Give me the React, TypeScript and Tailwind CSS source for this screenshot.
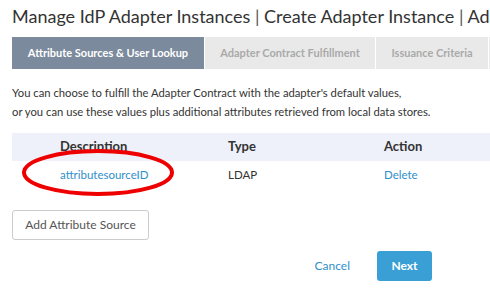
export default function App() {
  return (
    <div className="relative w-[490px] h-[298px] overflow-hidden bg-white font-['Lato','Open_Sans',sans-serif] text-[#333]">
      <h1 className="pl-3 pt-[4px] whitespace-nowrap text-[18px] leading-[24px] text-[#333]">
        Manage IdP Adapter Instances <span className="text-[#555]">|</span> Create Adapter Instance{' '}
        <span className="text-[#555]">|</span> Adapter Mappings
      </h1>

      <div className="flex ml-3 mt-[9px] h-8 whitespace-nowrap text-[11px] font-bold">
        <div className="w-[192px] shrink-0 flex items-center justify-center bg-[#7b8a9c] text-white">
          Attribute Sources &amp; User Lookup
        </div>
        <div className="w-[170px] shrink-0 ml-px flex items-center justify-center bg-[#e9e9e9] text-[#aaa]">
          Adapter Contract Fulfillment
        </div>
        <div className="w-[112px] shrink-0 ml-px flex items-center justify-center bg-[#e9e9e9] text-[#aaa]">
          Issuance Criteria
        </div>
        <div className="w-[60px] shrink-0 ml-px bg-[#e9e9e9]" />
      </div>

      <div className="pl-3 mt-[14px] text-[11.25px] leading-[19px] text-[#333]">
        <p>You can choose to fulfill the Adapter Contract with the adapter's default values,</p>
        <p>or you can use these values plus additional attributes retrieved from local data stores.</p>
      </div>

      <div className="ml-3 mt-[12px]">
        <div className="flex items-center h-[28px] bg-[#eef0fa] text-[13px] font-bold text-[#333]">
          <div className="w-[216px] pl-[48px]">Description</div>
          <div className="w-[156px]">Type</div>
          <div>Action</div>
        </div>
        <div className="flex items-center h-[28px] text-[11.5px]">
          <div className="w-[216px] pl-[48px] text-[#2f8fc9]">attributesourceID</div>
          <div className="w-[156px] text-[#333]">LDAP</div>
          <div className="text-[#2f8fc9]">Delete</div>
        </div>
      </div>

      <button className="ml-3 mt-[21px] w-[137px] h-[30px] border border-[#ccc] rounded-[3px] bg-white text-[12px] text-[#555]">
        Add Attribute Source
      </button>

      <div className="flex justify-end items-center gap-[27px] pr-[58px] mt-[11px]">
        <span className="text-[12px] text-[#2f8fc9]">Cancel</span>
        <button className="w-[55px] h-[30px] rounded-[3px] bg-[#3a9fd5] text-white text-[12px] font-bold">
          Next
        </button>
      </div>

      <svg className="absolute left-0 top-0 pointer-events-none" width="490" height="298">
        <ellipse cx="98" cy="172.5" rx="74" ry="21.5" fill="none" stroke="#ee0000" strokeWidth="4" />
      </svg>
    </div>
  );
}
